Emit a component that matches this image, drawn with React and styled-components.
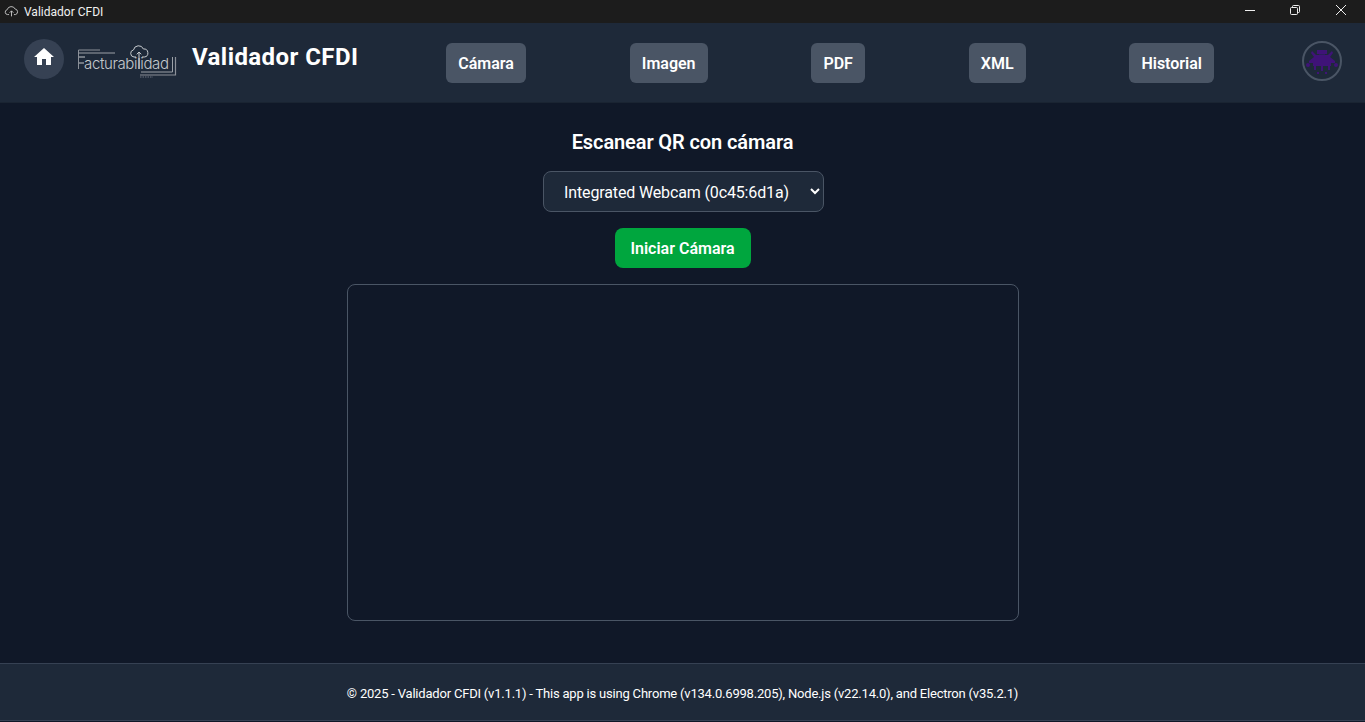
import React from 'react';
import styled, { createGlobalStyle } from 'styled-components';
import { MdHome } from 'react-icons/md';

const GlobalStyle = createGlobalStyle`
  html, body {
    margin: 0;
    padding: 0;
    background: #101828;
  }

  * {
    box-sizing: border-box;
  }

  body {
    font-family: Roboto, "Noto Sans", "Liberation Sans", sans-serif;
    color: #fff;
    overflow: hidden;
  }
`;

const Shell = styled.div`
  display: flex;
  flex-direction: column;
  height: 722px;
  background: #101828;
`;

const TitleBar = styled.div`
  display: flex;
  align-items: center;
  height: 23px;
  flex-shrink: 0;
  background: #1c1c1c;
  padding-left: 4px;
  font-size: 12px;
  color: #f0f0f0;
`;

const AppName = styled.span`
  margin-left: 5px;
  flex: 1;
`;

const WindowButton = styled.div`
  width: 46px;
  height: 23px;
  padding-bottom: 3px;
  padding-right: ${props => props.$nudge ? "2px" : "0"};
  display: flex;
  align-items: center;
  justify-content: center;
  color: #eee;
`;

const Header = styled.header`
  display: flex;
  align-items: flex-start;
  height: 80px;
  flex-shrink: 0;
  padding: 16px 23px 0 24px;
  background: #1e2939;
  border-bottom: 1px solid #1a2432;
`;

const Brand = styled.div`
  display: flex;
  align-items: flex-start;
  flex-shrink: 0;
`;

const HomeButton = styled.button`
  width: 40px;
  height: 40px;
  flex-shrink: 0;
  border: 0;
  border-radius: 50%;
  background: #364153;
  color: #fff;
  display: flex;
  align-items: center;
  justify-content: center;
  padding: 0 0 4px;
`;

const LogoBox = styled.div`
  margin-left: 13px;
  margin-top: 3px;
  width: 102px;
  height: 36px;
  flex-shrink: 0;
`;

const LogoText = styled.text`
  font-family: Inter, "Liberation Sans", sans-serif;
  font-size: 15px;
  font-weight: 300;
  fill: #c4c8cc;
`;

const AppTitle = styled.h1`
  margin: 2px 0 0 13px;
  font-size: 24px;
  line-height: 32px;
  font-weight: 700;
  letter-spacing: 0.43px;
  white-space: nowrap;
`;

const Nav = styled.nav`
  flex: 1;
  display: flex;
  justify-content: space-around;
  margin: 4px 36px 0 36px;
`;

const NavButton = styled.button`
  height: 40px;
  padding: 0 12px;
  border: 0;
  border-radius: 6px;
  background: #4a5565;
  color: #fff;
  font-family: inherit;
  font-size: 16px;
  font-weight: 600;
`;

const Avatar = styled.div`
  width: 40px;
  height: 40px;
  margin-top: 2px;
  border-radius: 50%;
  border: 2px solid #4a5565;
  display: flex;
  align-items: center;
  justify-content: center;
  flex-shrink: 0;
`;

const Main = styled.main`
  flex: 1;
  display: flex;
  flex-direction: column;
  align-items: center;
  padding-top: 25px;
`;

const Heading = styled.h2`
  margin: 0;
  font-size: 20px;
  line-height: 28px;
  font-weight: 600;
  letter-spacing: -0.1px;
`;

const CameraSelect = styled.select`
  margin: 15px 0 0 2px;
  width: 281px;
  height: 41px;
  padding: 1px 9px 0 7px;
  background: #1e2939;
  color: #fff;
  border: 1px solid #4a5565;
  border-radius: 8px;
  font-family: inherit;
  font-size: 16px;
  letter-spacing: -0.14px;
  text-align: center;
`;

const StartButton = styled.button`
  margin-top: 16px;
  width: 136px;
  height: 40px;
  border: 0;
  border-radius: 8px;
  background: #00a63e;
  color: #fff;
  font-family: inherit;
  font-size: 16px;
  font-weight: 600;
`;

const Viewer = styled.div`
  margin-top: 16px;
  width: 672px;
  height: 337px;
  border: 1px solid #4a5565;
  border-radius: 8px;
`;

const Footer = styled.footer`
  height: 58px;
  flex-shrink: 0;
  margin-bottom: 1px;
  padding-top: 3px;
  display: flex;
  align-items: center;
  justify-content: center;
  background: #1e2939;
  border-top: 1px solid #364153;
  border-bottom: 1px solid #364153;
  font-size: 13px;
  letter-spacing: -0.2px;
`;

function CloudIcon() {
  return (
    <svg width="15" height="11" viewBox="0 0 24 18" fill="none" stroke="#c8c8c8" strokeWidth="1.5">
      <path d="M8 14H5.5a4 4 0 0 1-.6-7.9A7 7 0 0 1 18 5a4.6 4.6 0 0 1 .5 9H16" />
      <path d="M12 17V8M9 11l3-3 3 3" />
    </svg>
  );
}

function Logo() {
  return (
    <LogoBox>
      <svg width="102" height="36" viewBox="0 0 102 36" fill="none">
        <path d="M1.5 27V8H23" stroke="#8b9098" strokeWidth="1" />
        <path d="M1.5 11H38" stroke="#9ca1a8" strokeWidth="1" />
        <path d="M2 15H8M2 21H7" stroke="#c4c8cc" strokeWidth="1" />
        <LogoText x="7" y="27" textLength="85" lengthAdjust="spacing">acturabilidad</LogoText>
        <path d="M95.5 15V30H64" stroke="#9ca1a8" strokeWidth="1" />
        <path d="M98.5 15V33H63" stroke="#8b9098" strokeWidth="1.2" />
        <g transform="translate(1,3)" stroke="#c8ccd0" strokeWidth="1">
          <path d="M58 12h-2a3.6 3.6 0 0 1-.5-7.1A5.2 5.2 0 0 1 65.4 4a4 4 0 0 1 .9 8H64" />
          <path d="M61 24V7M58.8 9.3 61 7l2.2 2.3" />
        </g>
        <path d="M63 35h13" stroke="#6b7280" strokeWidth="1.2" strokeDasharray="1.5 1" />
      </svg>
    </LogoBox>
  );
}

function AvatarFigure() {
  return (
    <svg width="34" height="30" viewBox="0 0 34 30" fill="#3f1378">
      <path d="M7 5l4 4h12l4-4 1 2-3 4 5 4v2H4v-2l5-4-3-4z" />
      <rect x="12" y="4" width="10" height="4" />
      <rect x="14" y="8" width="6" height="1" fill="#2c1c5e" />
      <rect x="8" y="17" width="18" height="3" />
      <circle cx="3" cy="19" r="2" />
      <circle cx="31" cy="19" r="2" />
      <rect x="9" y="20" width="2" height="4" />
      <rect x="16" y="20" width="2" height="5" />
      <rect x="23" y="20" width="2" height="4" />
      <rect x="12" y="26" width="2" height="2" />
      <rect x="20" y="26" width="2" height="2" />
    </svg>
  );
}

const navItems = ['Cámara', 'Imagen', 'PDF', 'XML', 'Historial'];

export default function App() {
  return (
    <Shell>
      <GlobalStyle />

      <TitleBar>
        <CloudIcon />
        <AppName>Validador CFDI</AppName>
        <WindowButton>
          <svg width="10" height="10" viewBox="0 0 10 10" stroke="currentColor" fill="none">
            <path d="M0 5.5h10" />
          </svg>
        </WindowButton>
        <WindowButton $nudge>
          <svg width="10" height="10" viewBox="0 0 10 10" stroke="currentColor" fill="none">
            <rect x="0.5" y="2.5" width="7" height="7" rx="1" />
            <path d="M2.5 2.5V1.5a1 1 0 0 1 1-1h5a1 1 0 0 1 1 1v5a1 1 0 0 1-1 1h-1" />
          </svg>
        </WindowButton>
        <WindowButton $nudge>
          <svg width="10" height="10" viewBox="0 0 10 10" stroke="currentColor" fill="none">
            <path d="M0 0l10 10M10 0L0 10" />
          </svg>
        </WindowButton>
      </TitleBar>

      <Header>
        <Brand>
          <HomeButton aria-label="Inicio">
            <MdHome size={24} />
          </HomeButton>
          <Logo />
          <AppTitle>Validador CFDI</AppTitle>
        </Brand>

        <Nav>
          {navItems.map(item => (
            <NavButton key={item}>{item}</NavButton>
          ))}
        </Nav>

        <Avatar>
          <AvatarFigure />
        </Avatar>
      </Header>

      <Main>
        <Heading>Escanear QR con cámara</Heading>
        <CameraSelect defaultValue="webcam">
          <option value="webcam">Integrated Webcam (0c45:6d1a)</option>
        </CameraSelect>
        <StartButton>Iniciar Cámara</StartButton>
        <Viewer />
      </Main>

      <Footer>
        © 2025 - Validador CFDI (v1.1.1) - This app is using Chrome (v134.0.6998.205), Node.js (v22.14.0), and Electron (v35.2.1)
      </Footer>
    </Shell>
  );
}
